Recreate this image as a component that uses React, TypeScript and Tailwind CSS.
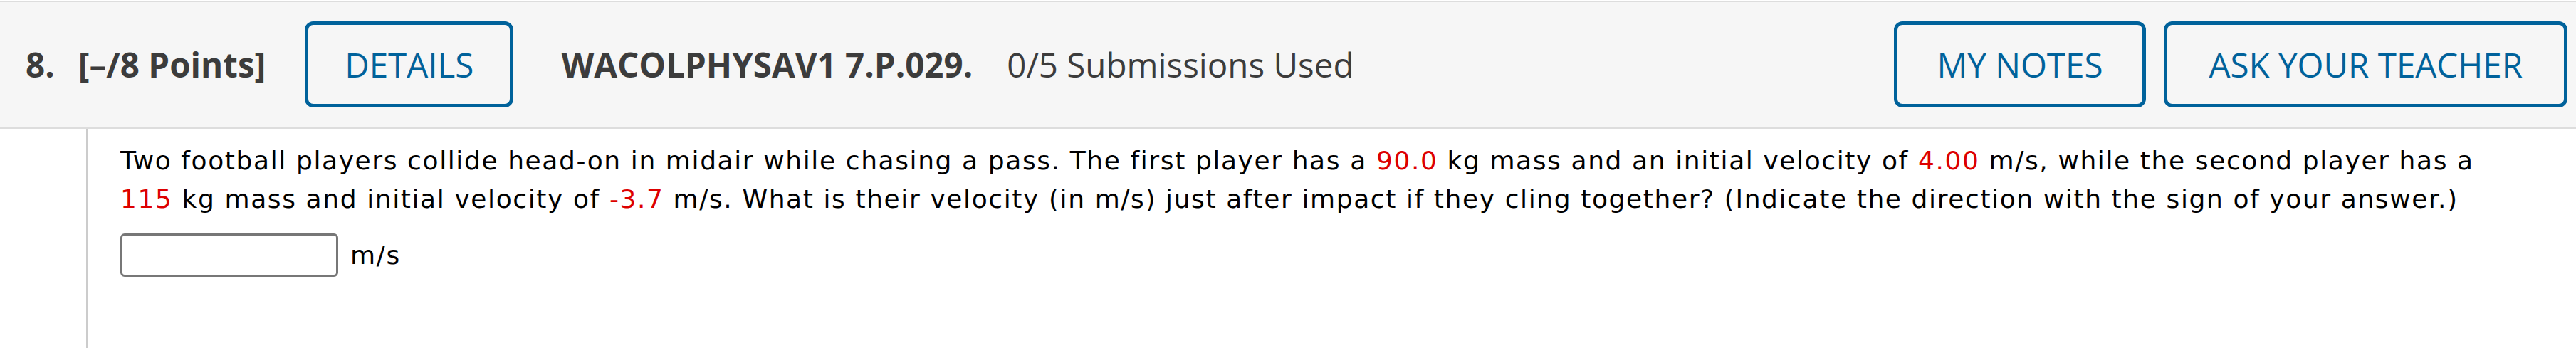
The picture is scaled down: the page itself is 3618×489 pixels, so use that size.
import React from "react";

const openSans = "font-['Open_Sans',sans-serif]";

function OutlineButton({ label, pad }: { label: string; pad: string }) {
  return (
    <button
      className={`h-[121px] ${pad} rounded-[12px] border-[5px] border-[#00629b] text-[#00629b] text-[47.5px] leading-none ${openSans} whitespace-nowrap bg-transparent`}
    >
      {label}
    </button>
  );
}

const Red = ({ children }: { children: React.ReactNode }) => (
  <span className="text-[#dd0000]">{children}</span>
);

export default function App() {
  return (
    <div className="w-[3618px] h-[489px] bg-white flex flex-col pt-px overflow-hidden">
      <div
        className={`h-[180px] shrink-0 bg-[#f6f6f6] border-t-2 border-b-[3px] border-[#dddddd] flex items-center pl-[36px] pr-[12px] text-[#3c3c3c] text-[47.5px] ${openSans}`}
      >
        <span className="font-bold">8.</span>
        <span className="font-bold ml-[33px]">[–/8 Points]</span>
        <div className="ml-[55px]">
          <OutlineButton label="DETAILS" pad="px-[51px]" />
        </div>
        <span className="font-bold ml-[67px]">WACOLPHYSAV1 7.P.029.</span>
        <span className="ml-[48px]">0/5 Submissions Used</span>
        <div className="ml-auto flex gap-[25px]">
          <OutlineButton label="MY NOTES" pad="px-[56px]" />
          <OutlineButton label="ASK YOUR TEACHER" pad="px-[58px]" />
        </div>
      </div>
      <div className="flex-1 flex">
        <div className="w-[121px] shrink-0" />
        <div className="w-[3px] bg-[#cccccc] shrink-0" />
        <div className="flex-1 pl-[45px] pr-[70px] pt-[18px] text-black text-[36px] leading-[54px] tracking-[1.6px] font-['DejaVu_Sans',Verdana,sans-serif]">
          <p>
            Two football players collide head-on in midair while chasing a pass. The first player has a{" "}
            <Red>90.0</Red> kg mass and an initial velocity of <Red>4.00</Red> m/s, while the second player has a{" "}
            <Red>115</Red> kg mass and initial velocity of <Red>-3.7</Red> m/s. What is their velocity (in m/s) just
            after impact if they cling together? (Indicate the direction with the sign of your answer.)
          </p>
          <div className="mt-[21px] flex items-center gap-[17px]">
            <input
              type="text"
              className="w-[306px] h-[61px] border-[3px] border-[#777777] rounded-[6px] bg-white outline-none"
            />
            <span>m/s</span>
          </div>
        </div>
      </div>
    </div>
  );
}
